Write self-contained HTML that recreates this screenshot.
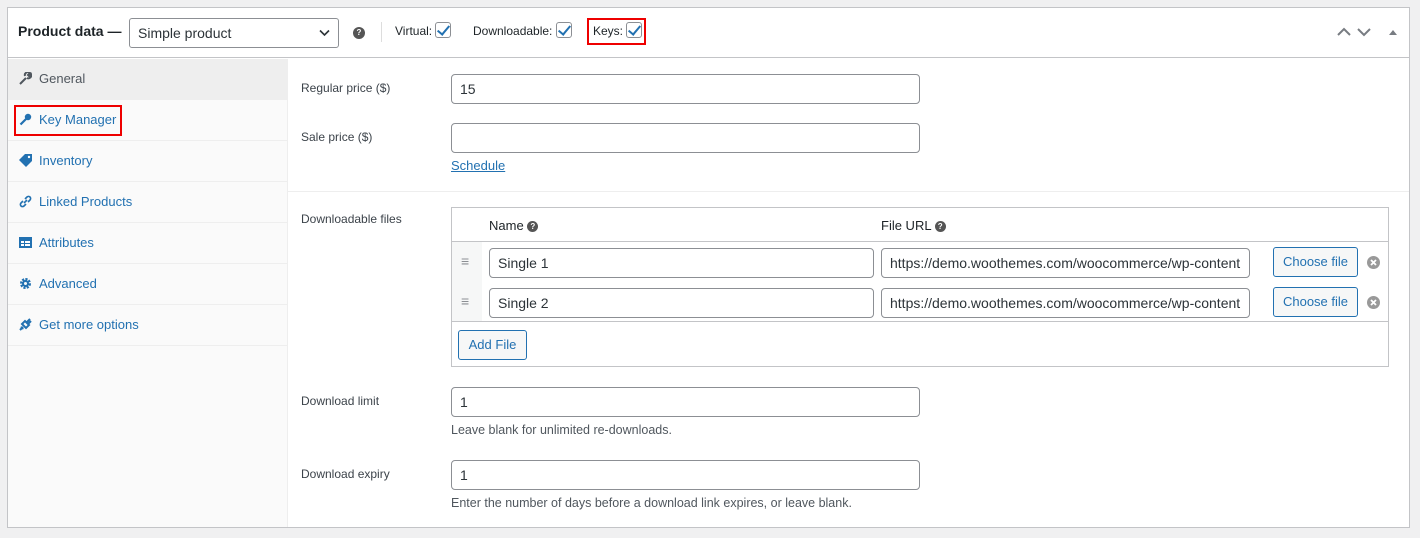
<!DOCTYPE html>
<html><head><meta charset="utf-8"><style>
*{box-sizing:border-box;margin:0;padding:0}
body{width:1420px;height:538px;background:#f0f0f1;font-family:"Liberation Sans",sans-serif;font-size:13px;color:#3c434a;position:relative;overflow:hidden}
.a{position:absolute}
.panel{left:7px;top:7px;width:1403px;height:521px;background:#fff;border:1px solid #c3c4c7}
.hdr{left:8px;top:8px;width:1401px;height:50px;border-bottom:1px solid #c3c4c7;background:#fff}
.side{left:8px;top:59px;width:280px;height:468px;background:#fafafa;border-right:1px solid #eee}
.item{position:absolute;left:0;width:279px;height:41px;border-bottom:1px solid #eee;color:#2271b1;line-height:40px;padding-left:31px}
.item svg{position:absolute;left:11px;top:13px}
.inp{position:absolute;height:30px;border:1px solid #8c8f94;border-radius:4px;background:#fff;padding-left:8px;line-height:28px;font-size:14px;color:#2c3338;white-space:nowrap;overflow:hidden}
.lbl{position:absolute;left:301px;font-size:12px;color:#3c434a}
.desc{position:absolute;left:451px;font-size:12.5px;color:#50575e}
.cb{display:inline-block;width:16px;height:16px;border:1px solid #8c8f94;border-radius:3px;vertical-align:middle;position:relative;background:#fff}
.cb:after{content:"";position:absolute;left:4px;top:0px;width:5px;height:10px;border:solid #2271b1;border-width:0 2px 2px 0;transform:rotate(40deg)}
.btn{position:absolute;height:30px;border:1px solid #2271b1;border-radius:3px;background:#f6f7f7;color:#2271b1;line-height:28px;text-align:center;font-size:13px}
.q{display:inline-block;width:11px;height:11px;border-radius:50%;background:#555;color:#fff;font-size:8px;line-height:11px;text-align:center;font-weight:bold;vertical-align:middle}
</style></head><body>
<div class="a panel"></div>
<div class="a hdr"></div>
<div class="a" style="left:18px;top:23px;font-size:14px;font-weight:bold;color:#1d2327;font-weight:600">Product data —</div>
<div class="a" style="left:129px;top:18px;width:210px;height:30px;border:1px solid #8c8f94;border-radius:3px;background:#fff;font-size:14px;line-height:28px;padding-left:8px;color:#2c3338">Simple product
<svg class="a" style="right:8px;top:10px" width="11" height="8" viewBox="0 0 11 8"><path d="M1 1.5l4.5 4.5 4.5-4.5" fill="none" stroke="#2c3338" stroke-width="1.6"/></svg></div>
<div class="a" style="left:353px;top:24px"><span class="q" style="width:12px;height:12px;line-height:12px">?</span></div>
<div class="a" style="left:381px;top:22px;width:1px;height:20px;background:#ddd"></div>
<div class="a" style="left:395px;top:24px;font-size:12px;color:#1d2327">Virtual: <span class="cb" style="top:-2px"></span></div>
<div class="a" style="left:473px;top:24px;font-size:12px;color:#1d2327">Downloadable: <span class="cb" style="top:-2px"></span></div>
<div class="a" style="left:587px;top:18px;width:59px;height:27px;border:2px solid #e00"></div>
<div class="a" style="left:593px;top:24px;font-size:12px;color:#1d2327">Keys: <span class="cb" style="top:-2px"></span></div>
<svg class="a" style="left:1337px;top:27px" width="70" height="10" viewBox="0 0 70 10"><path d="M1 8l6-6 6 6" fill="none" stroke="#787c82" stroke-width="2"/><path d="M21 2l6 6 6-6" fill="none" stroke="#787c82" stroke-width="2"/><path d="M52 8l4-5 4 5z" fill="#787c82"/></svg>

<div class="a side">
<div class="item" style="top:0;background:#eee;color:#50575e"><svg width="13" height="13" viewBox="0 0 13 13"><path d="M1 12l6-6M6 4a3 3 0 0 1 5-3l-2 2 1 1 2-2a3 3 0 0 1-4 4" fill="none" stroke="#50575e" stroke-width="2"/></svg>General</div>
<div class="item" style="top:41px"><svg width="13" height="13" viewBox="0 0 13 13"><circle cx="9" cy="4" r="3.2" fill="#2271b1"/><path d="M7 6l-5.5 5.5" stroke="#2271b1" stroke-width="2.2"/></svg>Key Manager</div>
<div class="item" style="top:82px"><svg width="13" height="13" viewBox="0 0 13 13"><path d="M6 0h7v7l-6 6-7-7z" fill="#2271b1"/><circle cx="10" cy="3" r="1.2" fill="#fff"/></svg>Inventory</div>
<div class="item" style="top:123px"><svg width="13" height="13" viewBox="0 0 13 13"><path d="M5 8l3-3M4 6l-2 2a2 2 0 0 0 3 3l2-2M9 7l2-2a2 2 0 0 0-3-3L6 4" fill="none" stroke="#2271b1" stroke-width="1.6"/></svg>Linked Products</div>
<div class="item" style="top:164px"><svg width="13" height="13" viewBox="0 0 13 13"><rect x="0" y="1" width="13" height="11" fill="#2271b1"/><rect x="2" y="5" width="3" height="2" fill="#fff"/><rect x="6" y="5" width="5" height="2" fill="#fff"/><rect x="2" y="8" width="3" height="2" fill="#fff"/><rect x="6" y="8" width="5" height="2" fill="#fff"/></svg>Attributes</div>
<div class="item" style="top:205px"><svg width="13" height="13" viewBox="0 0 13 13"><circle cx="6.5" cy="6.5" r="4" fill="none" stroke="#2271b1" stroke-width="3" stroke-dasharray="2 1.1"/><circle cx="6.5" cy="6.5" r="3.5" fill="#2271b1"/><circle cx="6.5" cy="6.5" r="1.5" fill="#fafafa"/></svg>Advanced</div>
<div class="item" style="top:246px"><svg width="13" height="13" viewBox="0 0 13 13"><path d="M1 12l3-3M3 6l4 4 3-3-4-4zM8 4l3-3M9 6l3-3" fill="none" stroke="#2271b1" stroke-width="2"/><path d="M2 8l3 3-4 1z" fill="#2271b1"/></svg>Get more options</div>
</div>
<div class="a" style="left:14px;top:105px;width:108px;height:31px;border:2px solid #e00"></div>

<div class="lbl" style="top:81px">Regular price ($)</div>
<div class="inp" style="left:451px;top:74px;width:469px">15</div>
<div class="lbl" style="top:130px">Sale price ($)</div>
<div class="inp" style="left:451px;top:123px;width:469px"></div>
<div class="desc" style="top:158px;color:#2271b1;text-decoration:underline;font-size:13px">Schedule</div>
<div class="a" style="left:288px;top:191px;width:1121px;height:1px;background:#eee"></div>

<div class="lbl" style="top:212px">Downloadable files</div>
<div class="a" style="left:451px;top:207px;width:938px;height:160px;border:1px solid #c3c4c7;background:#fff"></div>
<div class="a" style="left:489px;top:218px;font-size:13px;color:#1d2327">Name <span class="q">?</span></div>
<div class="a" style="left:881px;top:218px;font-size:13px;color:#1d2327">File URL <span class="q">?</span></div>
<div class="a" style="left:452px;top:241px;width:936px;height:1px;background:#c3c4c7"></div>
<div class="a" style="left:452px;top:242px;width:30px;height:79px;background:#f6f7f7"></div>
<div class="a" style="left:452px;top:321px;width:936px;height:1px;background:#c3c4c7"></div>
<div class="a" style="left:461px;top:253px;color:#8c8f94;font-size:14px">≡</div>
<div class="a" style="left:461px;top:293px;color:#8c8f94;font-size:14px">≡</div>
<div class="inp" style="left:489px;top:248px;width:385px">Single 1</div>
<div class="inp" style="left:881px;top:248px;width:369px">https://demo.woothemes.com/woocommerce/wp-content</div>
<div class="btn" style="left:1273px;top:247px;width:85px">Choose file</div>
<div class="inp" style="left:489px;top:288px;width:385px">Single 2</div>
<div class="inp" style="left:881px;top:288px;width:369px">https://demo.woothemes.com/woocommerce/wp-content</div>
<div class="btn" style="left:1273px;top:287px;width:85px">Choose file</div>
<svg class="a" style="left:1367px;top:256px" width="13" height="13" viewBox="0 0 13 13"><circle cx="6.5" cy="6.5" r="6.5" fill="#999"/><path d="M4 4l5 5M9 4l-5 5" stroke="#fff" stroke-width="1.8"/></svg>
<svg class="a" style="left:1367px;top:296px" width="13" height="13" viewBox="0 0 13 13"><circle cx="6.5" cy="6.5" r="6.5" fill="#999"/><path d="M4 4l5 5M9 4l-5 5" stroke="#fff" stroke-width="1.8"/></svg>
<div class="btn" style="left:458px;top:330px;width:69px">Add File</div>

<div class="lbl" style="top:394px">Download limit</div>
<div class="inp" style="left:451px;top:387px;width:469px">1</div>
<div class="desc" style="top:423px">Leave blank for unlimited re-downloads.</div>
<div class="lbl" style="top:467px">Download expiry</div>
<div class="inp" style="left:451px;top:460px;width:469px">1</div>
<div class="desc" style="top:496px">Enter the number of days before a download link expires, or leave blank.</div>
</body></html>
